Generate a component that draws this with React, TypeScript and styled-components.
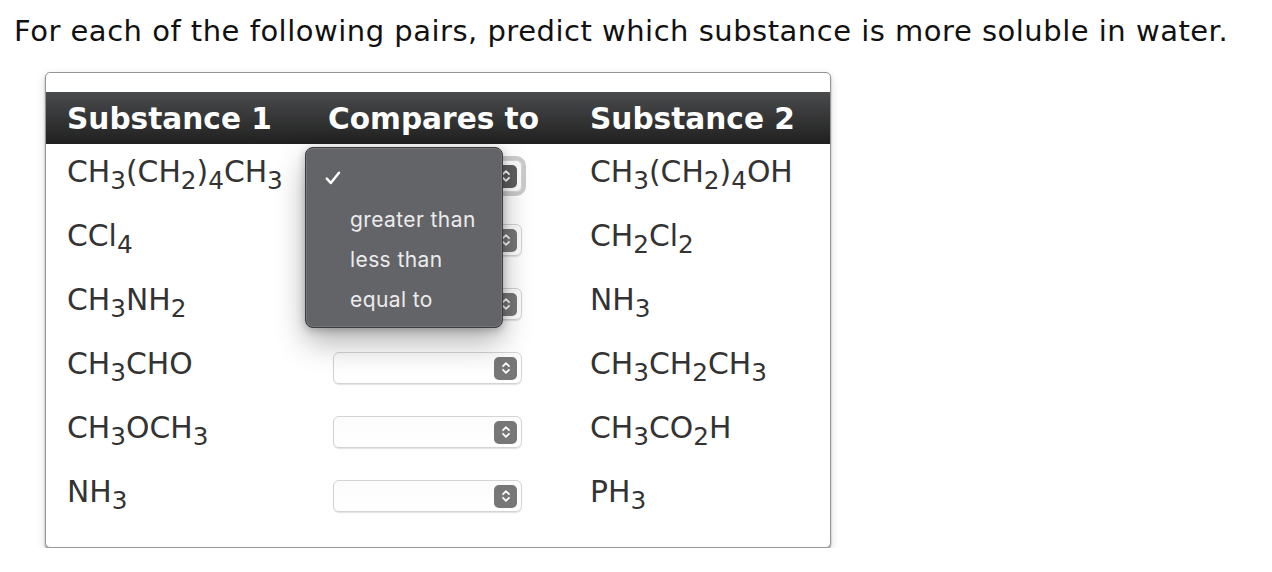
import styled, { createGlobalStyle } from 'styled-components';

const GlobalStyle = createGlobalStyle`
  html, body {
    margin: 0;
    padding: 0;
    background: #fff;
  }
  body {
    font-family: 'DejaVu Sans', Verdana, sans-serif;
  }
`;

type Formula = (string | { sub: string })[];

const rows: { left: Formula; right: Formula }[] = [
  { left: ['CH', { sub: '3' }, '(CH', { sub: '2' }, ')', { sub: '4' }, 'CH', { sub: '3' }], right: ['CH', { sub: '3' }, '(CH', { sub: '2' }, ')', { sub: '4' }, 'OH'] },
  { left: ['CCl', { sub: '4' }], right: ['CH', { sub: '2' }, 'Cl', { sub: '2' }] },
  { left: ['CH', { sub: '3' }, 'NH', { sub: '2' }], right: ['NH', { sub: '3' }] },
  { left: ['CH', { sub: '3' }, 'CHO'], right: ['CH', { sub: '3' }, 'CH', { sub: '2' }, 'CH', { sub: '3' }] },
  { left: ['CH', { sub: '3' }, 'OCH', { sub: '3' }], right: ['CH', { sub: '3' }, 'CO', { sub: '2' }, 'H'] },
  { left: ['NH', { sub: '3' }], right: ['PH', { sub: '3' }] },
];

const options = ['greater than', 'less than', 'equal to'];

const renderFormula = (parts: Formula) =>
  parts.map((p, i) => (typeof p === 'string' ? <span key={i}>{p}</span> : <Sub key={i}>{p.sub}</Sub>));

const Stepper = ({ dark }: { dark?: boolean }) => (
  <StepperBox $dark={dark}>
    <svg width="12" height="16" viewBox="0 0 12 16" fill="none">
      <path d="M3 6.2 L6 3.2 L9 6.2" stroke="#fff" strokeWidth="1.8" strokeLinecap="round" strokeLinejoin="round" />
      <path d="M3 9.8 L6 12.8 L9 9.8" stroke="#fff" strokeWidth="1.8" strokeLinecap="round" strokeLinejoin="round" />
    </svg>
  </StepperBox>
);

const App = () => {
  return (
    <>
      <GlobalStyle />
      <Page>
        <Question>For each of the following pairs, predict which substance is more soluble in water.</Question>
        <Card>
          <HeaderBar>
            <HeaderCell>Substance 1</HeaderCell>
            <HeaderCell>Compares to</HeaderCell>
            <HeaderCell>Substance 2</HeaderCell>
          </HeaderBar>
          {rows.map((row, i) => (
            <Row key={i}>
              <Formula>{renderFormula(row.left)}</Formula>
              <SelectCell>
                <Select $focused={i === 0}>
                  <Stepper dark={i === 0} />
                </Select>
                {i === 0 && (
                  <Menu>
                    <MenuItem>
                      <Check>
                        <svg width="16" height="14" viewBox="0 0 16 14" fill="none">
                          <path d="M1.8 7.6 L5.8 12 L14 1.8" stroke="#fff" strokeWidth="2.5" strokeLinecap="round" strokeLinejoin="round" />
                        </svg>
                      </Check>
                    </MenuItem>
                    {options.map((o) => (
                      <MenuItem key={o}>{o}</MenuItem>
                    ))}
                  </Menu>
                )}
              </SelectCell>
              <Formula>{renderFormula(row.right)}</Formula>
            </Row>
          ))}
        </Card>
      </Page>
    </>
  );
};

export default App;

const Page = styled.div`
  padding: 13px 0 0 14px;
`;

const Question = styled.div`
  font-family: 'DejaVu Sans', Verdana, sans-serif;
  font-size: 29px;
  letter-spacing: 0.5px;
  line-height: 36px;
  color: #111;
  white-space: nowrap;
`;

const Card = styled.div`
  margin: 23px 0 0 31px;
  width: 784px;
  padding: 19px 0 19px;
  border: 1px solid #959595;
  border-radius: 5px;
  background: #fff;
  box-shadow: 0 2px 2px rgba(0, 0, 0, 0.35), 0 3px 10px rgba(0, 0, 0, 0.14);
`;

const HeaderBar = styled.div`
  display: grid;
  grid-template-columns: 261px 262px 1fr;
  align-items: center;
  height: 52px;
  padding-left: 21px;
  background: linear-gradient(to bottom, #4a4b4d, #202020);
`;

const HeaderCell = styled.div`
  font-family: 'DejaVu Sans', Verdana, sans-serif;
  font-weight: bold;
  font-size: 29.6px;
  color: #fff;
  white-space: nowrap;
  padding-top: 2px;
`;

const Row = styled.div`
  display: grid;
  grid-template-columns: 261px 262px 1fr;
  align-items: center;
  height: 64px;
  padding-left: 21px;
`;

const Formula = styled.div`
  font-family: 'DejaVu Sans', Verdana, sans-serif;
  font-size: 29.8px;
  color: #333;
  white-space: nowrap;
  line-height: 1;
  padding-bottom: 8px;
`;

const Sub = styled.sub`
  font-size: 0.83em;
  vertical-align: -0.3em;
  line-height: 0;
`;

const SelectCell = styled.div`
  position: relative;
  padding-left: 5px;
`;

const Select = styled.div<{ $focused?: boolean }>`
  box-sizing: border-box;
  width: 189px;
  height: 32px;
  display: flex;
  align-items: center;
  justify-content: flex-end;
  padding-right: 4px;
  background: linear-gradient(to bottom, #fcfcfc, #fff);
  border: 1px solid #d4d4d4;
  border-radius: 6px;
  box-shadow: ${(p) =>
    p.$focused ? '0 0 0 4px rgba(140, 140, 140, 0.45)' : '0 1px 1px rgba(0, 0, 0, 0.12)'};
`;

const StepperBox = styled.div<{ $dark?: boolean }>`
  width: 23px;
  height: 23px;
  border-radius: 5px;
  background: ${(p) => (p.$dark ? '#5e5e5e' : '#777777')};
  display: flex;
  align-items: center;
  justify-content: center;
`;

const Menu = styled.div`
  position: absolute;
  left: -23px;
  top: -13px;
  box-sizing: border-box;
  width: 198px;
  height: 181px;
  padding: 11px 0;
  background: #636467;
  border: 1px solid #3c3c3e;
  border-radius: 8px;
  box-shadow: inset 0 0 0 1px rgba(255, 255, 255, 0.12), 0 14px 30px rgba(0, 0, 0, 0.3),
    0 2px 8px rgba(0, 0, 0, 0.25);
  z-index: 10;
`;

const MenuItem = styled.div`
  height: 40px;
  display: flex;
  align-items: center;
  padding-left: 44px;
  position: relative;
  font-family: Inter, 'Noto Sans', sans-serif;
  font-size: 21px;
  letter-spacing: 0.4px;
  color: #ececec;
`;

const Check = styled.span`
  position: absolute;
  left: 19px;
  top: 12px;
  display: flex;
`;
